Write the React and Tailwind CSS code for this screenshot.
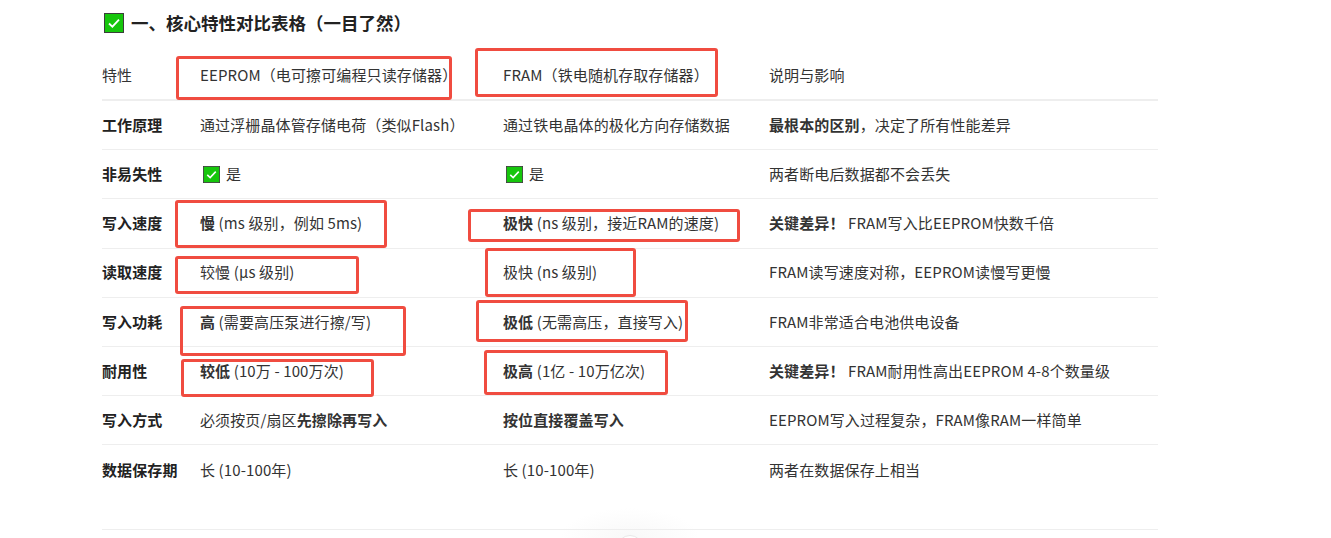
// Comparison table with hand-drawn red annotation boxes on top
const font = { fontFamily: '"Noto Sans CJK SC", "Noto Sans", sans-serif' };

const CheckBox = ({ className }) => (
  <svg className={className} viewBox="0 0 20 20">
    <rect x="0.5" y="0.5" width="19" height="19" fill="#16c60c" stroke="#3a3f3a" />
    <path d="M5 10.5l3.4 3.2L15 6.6" fill="none" stroke="#fff" strokeWidth="1.8" />
  </svg>
);

const Yes = () => (
  <span className="flex items-center gap-[6px] pl-[3px]">
    <CheckBox className="w-[17px] h-[17px]" />
    是
  </span>
);

const rows = [
  ["工作原理", "通过浮栅晶体管存储电荷（类似Flash）", "通过铁电晶体的极化方向存储数据", <><b>最根本的区别</b>，决定了所有性能差异</>],
  ["非易失性", <Yes />, <Yes />, "两者断电后数据都不会丢失"],
  ["写入速度", <><b>慢</b> (ms 级别，例如 5ms)</>, <><b>极快</b> (ns 级别，接近RAM的速度)</>, <><b>关键差异！</b> FRAM写入比EEPROM快数千倍</>],
  ["读取速度", "较慢 (μs 级别)", "极快 (ns 级别)", "FRAM读写速度对称，EEPROM读慢写更慢"],
  ["写入功耗", <><b>高</b> (需要高压泵进行擦/写)</>, <><b>极低</b> (无需高压，直接写入)</>, "FRAM非常适合电池供电设备"],
  ["耐用性", <><b>较低</b> (10万 - 100万次)</>, <><b>极高</b> (1亿 - 10万亿次)</>, <><b>关键差异！</b> FRAM耐用性高出EEPROM 4-8个数量级</>],
  ["写入方式", <>必须按页/扇区<b>先擦除再写入</b></>, <b>按位直接覆盖写入</b>, "EEPROM写入过程复杂，FRAM像RAM一样简单"],
  ["数据保存期", "长 (10-100年)", "长 (10-100年)", "两者在数据保存上相当"],
];

const RedBox = ({ className }) => (
  <div className={`absolute border-[3px] border-[#f04c40] rounded-[3px] ${className}`} />
);

export default function App() {
  return (
    <div className="relative h-[538px] overflow-hidden bg-white text-[#333] text-[15px] tracking-[0.12px]" style={font}>
      <div className="absolute left-[560px] top-[508px] w-[140px] h-[60px] rounded-full bg-[radial-gradient(closest-side,#f8f8f8,#ffffff)]" />
      <div className="absolute left-[617px] top-[535px] w-[26px] h-[26px] rounded-full bg-white border border-[#e8e8e8]" />

      <div className="relative ml-[102px] w-[1056px]">
        <h3 className="flex items-center h-[46px] pl-[2px] gap-[7px] text-[17.5px] font-bold text-[#222] tracking-normal">
          <CheckBox className="w-[20px] h-[20px]" />
          一、核心特性对比表格（一目了然）
        </h3>

        <div className="grid grid-cols-[98px_303px_266px_1fr] items-center h-[55px] pt-[6px] border-b-2 border-[#eee]">
          <div>特性</div>
          <div>EEPROM（电可擦可编程只读存储器）</div>
          <div>FRAM（铁电随机存取存储器）</div>
          <div>说明与影响</div>
        </div>

        {rows.map((row, i) => (
          <div
            key={row[0]}
            className={`grid grid-cols-[98px_303px_266px_1fr] items-center h-[49.2px] ${i < rows.length - 1 ? "border-b border-[#eee]" : ""}`}
          >
            <b className="text-[#222]">{row[0]}</b>
            <div>{row[1]}</div>
            <div>{row[2]}</div>
            <div>{row[3]}</div>
          </div>
        ))}

        <div className="mt-[34px] border-t border-[#eee]" />
      </div>

      <RedBox className="left-[176px] top-[56px] w-[276px] h-[44px]" />
      <RedBox className="left-[475px] top-[48px] w-[243px] h-[49px]" />
      <RedBox className="left-[175px] top-[200px] w-[212px] h-[48px]" />
      <RedBox className="left-[468px] top-[209px] w-[272px] h-[33px]" />
      <RedBox className="left-[175px] top-[256px] w-[184px] h-[38px]" />
      <RedBox className="left-[485px] top-[248px] w-[151px] h-[49px]" />
      <RedBox className="left-[180px] top-[306px] w-[226px] h-[50px]" />
      <RedBox className="left-[476px] top-[300px] w-[212px] h-[42px]" />
      <RedBox className="left-[181px] top-[359px] w-[193px] h-[38px]" />
      <RedBox className="left-[484px] top-[350px] w-[184px] h-[45px]" />
    </div>
  );
}
